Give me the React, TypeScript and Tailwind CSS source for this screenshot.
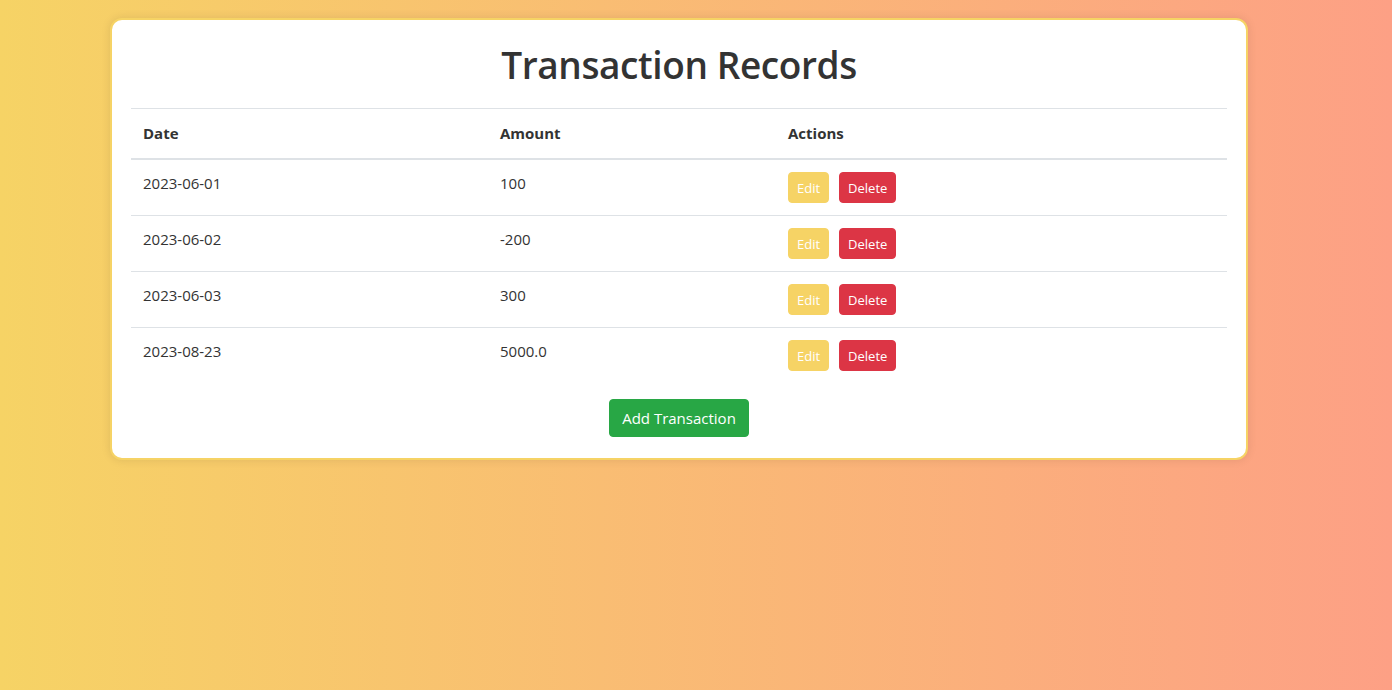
const rows = [
  { date: "2023-06-01", amount: "100" },
  { date: "2023-06-02", amount: "-200" },
  { date: "2023-06-03", amount: "300" },
  { date: "2023-08-23", amount: "5000.0" },
];

export default function App() {
  return (
    <div
      className="min-h-[690px] w-full bg-[linear-gradient(to_right,#f6d365,#fda085)] pt-[18px] text-[#333]"
      style={{ fontFamily: '"Open Sans", "Noto Sans", sans-serif' }}
    >
      <div className="ml-[110px] w-[1138px] rounded-xl border-2 border-[#f6d365] bg-white px-[19px] pt-[20px] pb-[21px] shadow-[0_0_10px_rgba(0,0,0,0.1)]">
        <h1 className="mb-5 pt-[2px] text-center text-[37px] font-semibold leading-[46px] tracking-[-0.4px] text-[#333]">
          Transaction Records
        </h1>

        <table className="w-full border-collapse text-[15px] leading-6">
          <thead>
            <tr className="border-t border-[#dee2e6]">
              <th className="w-[357px] border-b-2 border-[#dee2e6] px-3 pt-3 pb-[13px] text-left font-bold">Date</th>
              <th className="w-[288px] border-b-2 border-[#dee2e6] px-3 pt-3 pb-[13px] text-left font-bold">Amount</th>
              <th className="border-b-2 border-[#dee2e6] px-3 pt-3 pb-[13px] text-left font-bold">Actions</th>
            </tr>
          </thead>
          <tbody>
            {rows.map((row, i) => (
              <tr key={row.date} className={i < rows.length - 1 ? "border-b border-[#dee2e6]" : ""}>
                <td className="px-3 pt-[11px] pb-3 align-top">{row.date}</td>
                <td className="px-3 pt-[11px] pb-3 align-top">{row.amount}</td>
                <td className="px-3 pt-3 pb-3 align-top">
                  <div className="flex gap-[10px]">
                    <button className="h-[31px] rounded border border-[#f6d365] bg-[#f6d365] px-2 text-[13px] text-white">
                      Edit
                    </button>
                    <button className="h-[31px] rounded border border-[#dc3545] bg-[#dc3545] px-2 text-[13px] text-white">
                      Delete
                    </button>
                  </div>
                </td>
              </tr>
            ))}
          </tbody>
        </table>

        <div className="mt-4 flex justify-center">
          <button className="h-[38px] rounded border border-[#28a745] bg-[#28a745] px-3 text-[15px] text-white">
            Add Transaction
          </button>
        </div>
      </div>
    </div>
  );
}
